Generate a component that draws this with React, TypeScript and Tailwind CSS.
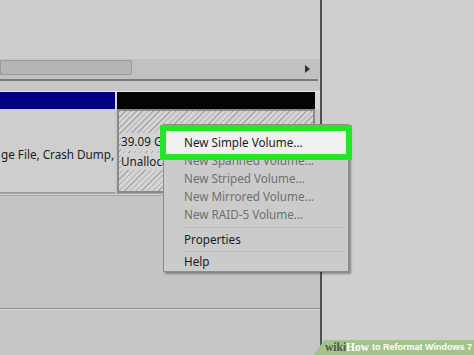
import React from "react";

const disabledItems = [
  "New Spanned Volume...",
  "New Striped Volume...",
  "New Mirrored Volume...",
  "New RAID-5 Volume...",
];

function ContextMenu() {
  return (
    <div className="absolute left-[163px] top-[124px] w-[186px] border border-[#8c8c8c] bg-[#cbcbcb] pt-[9px] shadow-[2px_2px_2px_rgba(0,0,0,0.35)]">
      <div className="flex h-[18px] items-center pl-[20px] text-[#1c1c1c]">New Simple Volume...</div>
      {disabledItems.map((label) => (
        <div key={label} className="flex h-[18px] items-center pl-[20px] text-[#6f6f6f]">
          {label}
        </div>
      ))}
      <div className="flex h-[7px] items-center pl-[18px] pr-[4px]">
        <div className="h-px w-full bg-[#bcbcbc]" />
      </div>
      <div className="flex h-[18px] items-center pl-[20px] text-[#1c1c1c]">Properties</div>
      <div className="flex h-[4px] items-center pl-[18px] pr-[4px]">
        <div className="h-px w-full bg-[#bcbcbc]" />
      </div>
      <div className="flex h-[18px] items-center pl-[20px] text-[#1c1c1c]">Help</div>
    </div>
  );
}

export default function App() {
  return (
    <div
      className="relative flex h-[355px] w-[474px] overflow-hidden bg-[#cfcfcf] text-[11.7px]"
      style={{ fontFamily: '"Noto Sans", "Open Sans", sans-serif' }}
    >
      {/* disk management pane */}
      <div className="flex w-[320px] shrink-0 flex-col bg-[#c9c9c9]">
        <div className="h-[59px] bg-[#cdcdcd]" />
        {/* horizontal scrollbar */}
        <div className="flex h-[20px] items-start justify-between bg-[#c1c1c1] pr-[9px]">
          <div className="mt-px h-[15px] w-[132px] rounded-r-[2px] border border-[#9a9a9a] bg-[#b6b6b6]" />
          <svg width="6" height="8" viewBox="0 0 6 8" className="mt-[6px]">
            <path d="M0 0 L5 4 L0 8 Z" fill="#333" />
          </svg>
        </div>
        <div className="flex h-[2px] w-[318px] bg-[#7a7a7a]" />
        <div className="h-[10px] bg-[#c8c8c8]" />
        <div className="h-px bg-[#e6e6e6]" />
        {/* volume header bars */}
        <div className="flex h-[17px] gap-[2px] bg-[#d8d8d8] pr-[5px]">
          <div className="w-[115px] bg-[#000080]" />
          <div className="flex-1 bg-[#040404]" />
        </div>
        {/* volume boxes */}
        <div className="flex h-[84px] gap-[2px] bg-[#c9c9c9] pr-[5px]">
          <div className="flex w-[115px] flex-col justify-center overflow-hidden border-b border-[#9a9a9a] bg-[#cecece] pt-[8px] text-[#1c1c1c]">
            <span className="whitespace-nowrap pl-[1px]">ge File, Crash Dump,</span>
          </div>
          <div className="flex flex-1 border-2 border-[#8a8a8a] bg-[repeating-linear-gradient(135deg,#a9a9a9_0px,#a9a9a9_1px,#d4d4d4_1px,#d4d4d4_4px)] p-[2px]">
            <div className="mt-[4px] flex flex-1 flex-col justify-center gap-[2px] pb-[3px] text-[#1c1c1c]">
              <span className="w-fit whitespace-nowrap bg-[#d2d2d2] pr-[2px]">39.09 GB</span>
              <span className="w-fit whitespace-nowrap bg-[#d2d2d2] pr-[2px]">Unallocated</span>
            </div>
          </div>
        </div>
        <div className="h-[3px] border-y border-[#a8a8a8] bg-[#d0d0d0]" />
        <div className="h-[112px] bg-[#c4c4c4]" />
        <div className="h-[2px] border-t border-[#8e8e8e] bg-[#dadada]" />
        <div className="flex-1 bg-[#c6c6c6]" />
      </div>
      <div className="w-[2px] shrink-0 bg-[#505050]" />
      <div className="flex-1 bg-[#cfcfcf]" />

      <ContextMenu />

      {/* highlight */}
      <div className="absolute left-[160px] top-[125px] flex h-[35px] w-[192px] items-center border-[6px] border-[#26e626] bg-[#f1f1f1] pl-[18px] text-[#1c1c1c]">
        New Simple Volume...
      </div>

      {/* watermark */}
      <div
        className="absolute bottom-0 right-0 flex h-[15px] w-[160px] items-center whitespace-nowrap bg-[#a3c28c] pl-[11px] text-[9px] font-bold text-white [clip-path:polygon(10px_0,100%_0,100%_100%,0_100%)]"
        style={{ fontFamily: '"Liberation Sans", Arial, sans-serif' }}
      >
        <span className="text-[11.5px] text-[#4d5a42]" style={{ fontFamily: '"Liberation Serif", serif' }}>
          wiki
        </span>
        <span className="text-[11.5px]" style={{ fontFamily: '"Liberation Serif", serif' }}>
          How
        </span>
        <span className="ml-[3px]">to Reformat Windows 7</span>
      </div>
    </div>
  );
}
